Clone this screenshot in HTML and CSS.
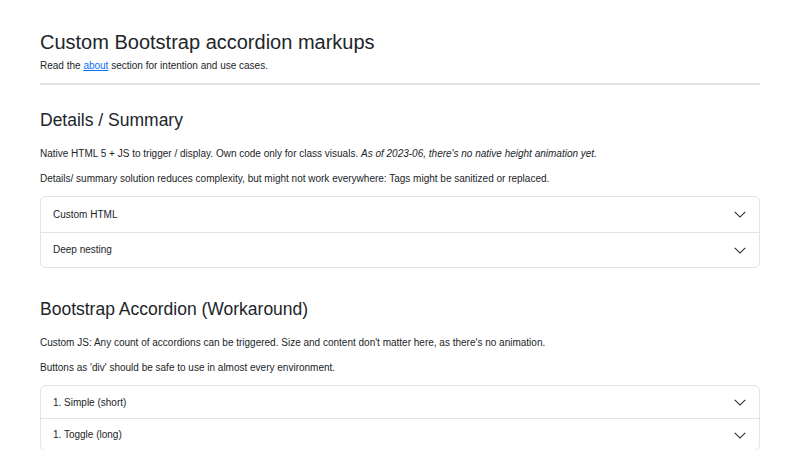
FILE: index.html
```html
<!DOCTYPE html>
<html lang="en">
<head>
<meta charset="utf-8">
<title>Custom Bootstrap accordion markups</title>
<link rel="stylesheet" href="styles.css">
</head>
<body>
<main class="container">
  <h1 class="title">Custom Bootstrap accordion markups</h1>
  <p class="lead-note">Read the <a href="#about">about</a> section for intention and use cases.</p>
  <hr class="divider">

  <section class="block">
    <h2 class="section-title">Details / Summary</h2>
    <p class="text">Native HTML 5 + JS to trigger / display. Own code only for class visuals. <em>As of 2023-06, there's no native height animation yet.</em></p>
    <p class="text">Details/ summary solution reduces complexity, but might not work everywhere: Tags might be sanitized or replaced.</p>
    <div class="accordion">
      <div class="acc-item acc-details">
        <span class="acc-label">Custom HTML</span>
        <svg class="chev" viewBox="0 0 16 16" width="14" height="14"><path d="M2 5.5L8 11.5L14 5.5" fill="none" stroke="#212529" stroke-width="1.2"/></svg>
      </div>
      <div class="acc-item acc-details">
        <span class="acc-label">Deep nesting</span>
        <svg class="chev" viewBox="0 0 16 16" width="14" height="14"><path d="M2 5.5L8 11.5L14 5.5" fill="none" stroke="#212529" stroke-width="1.2"/></svg>
      </div>
    </div>
  </section>

  <section class="block block-second">
    <h2 class="section-title">Bootstrap Accordion (Workaround)</h2>
    <p class="text">Custom JS: Any count of accordions can be triggered. Size and content don't matter here, as there's no animation.</p>
    <p class="text">Buttons as 'div' should be safe to use in almost every environment.</p>
    <div class="accordion">
      <div class="acc-item acc-button">
        <span class="acc-label">1. Simple (short)</span>
        <svg class="chev" viewBox="0 0 16 16" width="14" height="14"><path d="M2 5.5L8 11.5L14 5.5" fill="none" stroke="#212529" stroke-width="1.2"/></svg>
      </div>
      <div class="acc-item acc-button">
        <span class="acc-label">1. Toggle (long)</span>
        <svg class="chev" viewBox="0 0 16 16" width="14" height="14"><path d="M2 5.5L8 11.5L14 5.5" fill="none" stroke="#212529" stroke-width="1.2"/></svg>
      </div>
    </div>
  </section>
</main>
</body>
</html>
```

FILE: styles.css
```css
* { box-sizing: border-box; }
html, body { margin: 0; padding: 0; background: #fff; }
body {
  font-family: "Liberation Sans", Arial, sans-serif;
  font-size: 10px;
  line-height: 15px;
  color: #212529;
}
.container {
  width: 800px;
  padding: 30px 40px 0;
}
.title {
  margin: 0 0 4px;
  font-size: 20px;
  line-height: 24px;
  font-weight: 400;
}
.lead-note { margin: 0; }
.lead-note a { color: #0d6efd; text-decoration: underline; }
.divider {
  margin: 10px 0 0;
  border: 0;
  border-top: 2px solid #e4e4e4;
  height: 0;
}
.block { margin-top: 24.5px; }
.block-second { margin-top: 31.5px; }
.section-title {
  margin: 0 0 15px;
  font-size: 17.5px;
  line-height: 21px;
  font-weight: 400;
}
.text { margin: 0 0 10px; }
.text em { font-style: italic; }
.accordion {
  margin-top: 9.5px;
  border: 1px solid #e1e4e8;
  border-radius: 6px;
  overflow: hidden;
}
.acc-item {
  display: flex;
  align-items: center;
  justify-content: space-between;
  padding: 0 12px 0 12px;
}
.acc-item + .acc-item { border-top: 1px solid #e1e4e8; }
.acc-details { height: 35px; }
.acc-button { height: 32px; }
.chev { display: block; }
```
